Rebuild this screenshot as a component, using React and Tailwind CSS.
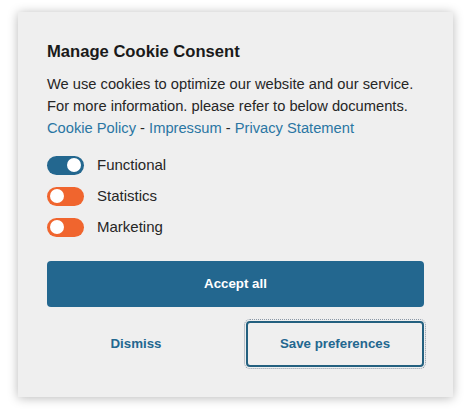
import React from 'react';

const Toggle = ({ on, color }) => (
  <span
    className={`relative inline-flex items-center w-[37px] h-[19px] rounded-full flex-shrink-0 ${color}`}
  >
    <span
      className={`absolute top-[2.5px] w-[14px] h-[14px] rounded-full bg-white ${on ? 'right-[3px]' : 'left-[3px]'}`}
    />
  </span>
);

const App = () => {
  const options = [
    { label: 'Functional', on: true, color: 'bg-[#23678f]' },
    { label: 'Statistics', on: false, color: 'bg-[#f0652e]' },
    { label: 'Marketing', on: false, color: 'bg-[#f0652e]' },
  ];

  return (
    <div
      className="w-[474px] h-[416px] bg-white pt-[12px] pl-[18px]"
      style={{ fontFamily: '"Liberation Sans", Arial, sans-serif' }}
    >
      <div className="w-[435px] h-[385px] bg-[#efefef] shadow-[0_1px_10px_rgba(0,0,0,0.28)] pt-[28px] px-[29px] pb-[30px]">
        <h2 className="text-[16.6px] leading-[24px] font-bold text-[#1a1a1a]">Manage Cookie Consent</h2>
        <p className="mt-[9px] text-[14.7px] leading-[22px] text-[#262626]">
          We use cookies to optimize our website and our service.
          <br />
          For more information. please refer to below documents.
          <br />
          <span className="text-[#2a76a3]">Cookie Policy</span> -{' '}
          <span className="text-[#2a76a3]">Impressum</span> -{' '}
          <span className="text-[#2a76a3]">Privacy Statement</span>
        </p>

        <div className="mt-[14px] flex flex-col gap-[7px]">
          {options.map((o) => (
            <div key={o.label} className="flex items-center gap-[13px] h-[24px]">
              <Toggle on={o.on} color={o.color} />
              <span className="text-[15px] text-[#262626]">{o.label}</span>
            </div>
          ))}
        </div>

        <button className="mt-[22px] w-full h-[46px] rounded-[4px] bg-[#23678f] text-white text-[13.3px] font-bold">
          Accept all
        </button>

        <div className="mt-[14px] grid grid-cols-2 gap-[21px]">
          <button className="h-[46px] text-[13.3px] font-bold text-[#23678f]">Dismiss</button>
          <button className="h-[46px] rounded-[4px] border-2 border-[#23607f] text-[13.3px] font-bold text-[#23678f] outline outline-1 outline-dotted outline-offset-[1px] outline-[#8a98a6]">
            Save preferences
          </button>
        </div>
      </div>
    </div>
  );
};

export default App;
